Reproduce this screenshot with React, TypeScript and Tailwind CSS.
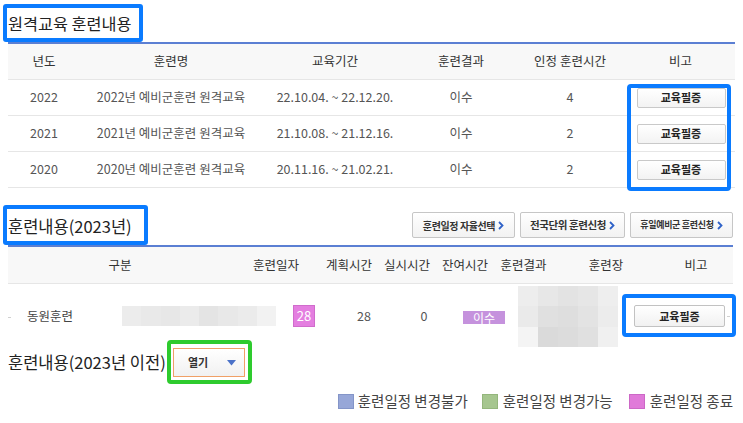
import React from "react";

const F = "[font-family:'Noto_Sans_CJK_KR','Noto_Sans',sans-serif]";

function Chevron() {
  return (
    <svg width="6" height="9" viewBox="0 0 6 9" className="ml-[3px] shrink-0">
      <polyline points="1,1 4.5,4.5 1,8" fill="none" stroke="#2f62c8" strokeWidth="1.8" />
    </svg>
  );
}

function CertButton() {
  return (
    <div className="w-[89px] h-[20px] border border-[#c9c9c9] rounded-[2px] bg-gradient-to-b from-white to-[#f3f3f3] flex items-center justify-center text-[11px] font-bold text-[#222] leading-none">
      교육필증
    </div>
  );
}

const t1Rows = [
  ["2022", "2022년 예비군훈련 원격교육", "22.10.04. ~ 22.12.20.", "이수", "4"],
  ["2021", "2021년 예비군훈련 원격교육", "21.10.08. ~ 21.12.16.", "이수", "2"],
  ["2020", "2020년 예비군훈련 원격교육", "20.11.16. ~ 21.02.21.", "이수", "2"],
];

const blurA = ["#ececec", "#e9e9e9", "#e7e7e7", "#ebebeb", "#e4e4e4", "#e8e8e8", "#ebebeb", "#f2f2f2"];
const mosaic = [
  ["#ededed", "#e7e7e7", "#e3e3e3", "#e6e6e6", "#eeeeee"],
  ["#eaeaea", "#e0e0e0", "#dedede", "#e3e3e3", "#ececec"],
  ["#f4f4f4", "#dadada", "#dcdcdc", "#e0e0e0", "#f0f0f0"],
];

export default function App() {
  return (
    <div className={`${F} w-[743px] h-[423px] bg-white text-[#555] overflow-hidden`}>
      {/* Section 1 */}
      <div className="pt-[4px]">
        <div className="ml-[3px] w-[140px] h-[38px] border-4 border-[#0a7bff] rounded-[3px] flex items-center pl-px">
          <span className="text-[16.3px] text-[#222] whitespace-nowrap leading-none">원격교육 훈련내용</span>
        </div>
        <div className="relative ml-[8px] w-[727px] border-t-2 border-[#5b7fd3]">
          <div className="grid grid-cols-[72px_182px_146px_106px_112px_109px] h-[36px] bg-[#f8f8f8] border-b border-[#e6e6e6] items-center text-center text-[12.5px] text-[#333]">
            <div>년도</div>
            <div>훈련명</div>
            <div>교육기간</div>
            <div>훈련결과</div>
            <div className="whitespace-nowrap">인정 훈련시간</div>
            <div>비고</div>
          </div>
          {t1Rows.map((r) => (
            <div
              key={r[0]}
              className="grid grid-cols-[72px_182px_146px_106px_112px_109px] h-[36px] border-b border-[#e6e6e6] items-center text-center text-[12.5px] text-[#555]"
            >
              <div>{r[0]}</div>
              <div className="whitespace-nowrap">{r[1]}</div>
              <div className="whitespace-nowrap">{r[2]}</div>
              <div>{r[3]}</div>
              <div>{r[4]}</div>
              <div className="flex justify-center pl-px">
                <CertButton />
              </div>
            </div>
          ))}
          <div className="absolute left-[619px] top-[40px] w-[104px] h-[107px] border-4 border-[#0a7bff] rounded-[4px]" />
        </div>
      </div>

      {/* Section 2 */}
      <div className="mt-[17px]">
        <div className="flex justify-between items-start h-[40px]">
          <div className="ml-[3px] w-[145px] h-[40px] border-4 border-[#0a7bff] rounded-[3px] flex items-center pl-px pt-[2px]">
            <span className="text-[16.5px] text-[#222] whitespace-nowrap leading-none">훈련내용(2023년)</span>
          </div>
          <div className="flex gap-[5px] mt-[7px] mr-[10px]">
            <div className="w-[103px] h-[26px] border border-[#c6c6c6] rounded-[2px] bg-gradient-to-b from-white to-[#f2f2f2] flex items-center justify-center text-[10px] font-bold text-[#333] tracking-[-0.4px] whitespace-nowrap">
              훈련일정 자율선택<Chevron />
            </div>
            <div className="w-[105px] h-[26px] border border-[#c6c6c6] rounded-[2px] bg-gradient-to-b from-white to-[#f2f2f2] flex items-center justify-center text-[10.5px] font-bold text-[#333] tracking-[-0.4px] whitespace-nowrap">
              전국단위 훈련신청<Chevron />
            </div>
            <div className="w-[103px] h-[26px] border border-[#c6c6c6] rounded-[2px] bg-gradient-to-b from-white to-[#f2f2f2] flex items-center justify-center text-[9px] font-bold text-[#333] tracking-[-0.3px] whitespace-nowrap">
              휴일예비군 훈련신청<Chevron />
            </div>
          </div>
        </div>
        <div className="ml-[8px] w-[725px] border-t-2 border-[#5b7fd3]">
          <div className="grid grid-cols-[224px_88px_58px_58px_58px_59px_106px_74px] h-[37px] bg-[#f8f8f8] border-b border-[#e6e6e6] items-center text-center text-[12.5px] text-[#333] whitespace-nowrap">
            <div>구분</div>
            <div>훈련일자</div>
            <div>계획시간</div>
            <div>실시시간</div>
            <div>잔여시간</div>
            <div>훈련결과</div>
            <div>훈련장</div>
            <div>비고</div>
          </div>
          <div className="flex items-start h-[56px] pt-[21px] text-[12.5px] text-[#555]">
            <div className="w-[3px] h-px bg-[#d0d0d0] mt-[12px]" />
            <div className="ml-[16px] w-[46px] h-[22px] flex items-center whitespace-nowrap text-[#444]">동원훈련</div>
            <div className="ml-[49px] mt-px w-[154px] h-[20px] flex">
              {blurA.map((c, i) => (
                <div key={i} className="flex-1 h-full" style={{ backgroundColor: c }} />
              ))}
            </div>
            <div className="ml-[17px] w-[22px] h-[22px] bg-[#e47ee0] border border-[#d06ccc] flex items-center justify-center text-white text-[13px]">
              28
            </div>
            <div className="ml-[34px] w-[30px] h-[22px] flex items-center justify-center">28</div>
            <div className="ml-[30px] w-[30px] h-[22px] flex items-center justify-center">0</div>
            <div className="ml-[24px] mt-[6px] w-[42px] h-[13px] bg-[#c592dd] flex items-center justify-center text-[12px] text-white leading-none">
              이수
            </div>
            <div className="ml-[13px] -mt-[19px] w-[100px] h-[61px] flex flex-col">
              {mosaic.map((row, i) => (
                <div key={i} className="flex flex-1">
                  {row.map((c, j) => (
                    <div key={j} className="flex-1" style={{ backgroundColor: c }} />
                  ))}
                </div>
              ))}
            </div>
            <div className="relative ml-[16px]">
              <div className="w-[91px] h-[22px] border border-[#c2c2c2] rounded-[2px] bg-gradient-to-b from-white to-[#f1f1f1] flex items-center justify-center text-[11px] font-bold text-[#222] leading-none">
                교육필증
              </div>
              <div className="absolute -left-[12px] -top-[11px] w-[114px] h-[43px] border-4 border-[#0a7bff] rounded-[4px]" />
            </div>
            <div className="ml-[2px] w-[3px] h-px bg-[#d0d0d0] mt-[11px]" />
          </div>
        </div>
      </div>

      {/* Section 3 */}
      <div className="flex items-center h-[44px]">
        <div className="w-[167px] pl-[8px] whitespace-nowrap text-[16.5px] text-[#222] leading-none">훈련내용(2023년 이전)</div>
        <div className="w-[85px] h-[44px] border-4 border-[#2ecb2e] rounded-[4px] pt-[4px] pl-[2px]">
          <div className="w-[72px] h-[29px] border border-[#f0a066] bg-gradient-to-b from-white to-[#f1f1f1] flex items-center pl-[14px]">
            <span className="text-[11px] font-semibold text-[#333] leading-none">열기</span>
            <svg width="9" height="6" viewBox="0 0 9 6" className="ml-[19px]">
              <polygon points="0,0 9,0 4.5,5.5" fill="#4b72c8" />
            </svg>
          </div>
        </div>
      </div>

      {/* Legend */}
      <div className="mt-[10px] flex justify-end items-center pr-[10px] text-[14.5px] text-[#444] leading-none whitespace-nowrap">
        <div className="w-[16px] h-[15px] bg-[#97a7d8] border border-[#8495c8]" />
        <span className="ml-[4px]">훈련일정 변경불가</span>
        <div className="ml-[14px] w-[16px] h-[15px] bg-[#a6c68f] border border-[#94b67c]" />
        <span className="ml-[5px]">훈련일정 변경가능</span>
        <div className="ml-[16px] w-[16px] h-[15px] bg-[#e07ad9] border border-[#cc68c6]" />
        <span className="ml-[5px]">훈련일정 종료</span>
      </div>
    </div>
  );
}
